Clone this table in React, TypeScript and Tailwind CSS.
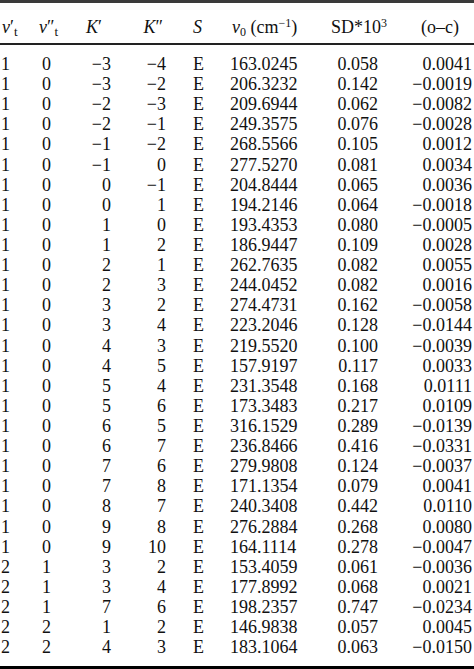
const cols = "grid grid-cols-[42px_28px_41px_55px_64px_70px_78px_1fr]";

const rows: string[][] = [
  ["1", "0", "−3", "−4", "E", "163.0245", "0.058", "0.0041"],
  ["1", "0", "−3", "−2", "E", "206.3232", "0.142", "−0.0019"],
  ["1", "0", "−2", "−3", "E", "209.6944", "0.062", "−0.0082"],
  ["1", "0", "−2", "−1", "E", "249.3575", "0.076", "−0.0028"],
  ["1", "0", "−1", "−2", "E", "268.5566", "0.105", "0.0012"],
  ["1", "0", "−1", "0", "E", "277.5270", "0.081", "0.0034"],
  ["1", "0", "0", "−1", "E", "204.8444", "0.065", "0.0036"],
  ["1", "0", "0", "1", "E", "194.2146", "0.064", "−0.0018"],
  ["1", "0", "1", "0", "E", "193.4353", "0.080", "−0.0005"],
  ["1", "0", "1", "2", "E", "186.9447", "0.109", "0.0028"],
  ["1", "0", "2", "1", "E", "262.7635", "0.082", "0.0055"],
  ["1", "0", "2", "3", "E", "244.0452", "0.082", "0.0016"],
  ["1", "0", "3", "2", "E", "274.4731", "0.162", "−0.0058"],
  ["1", "0", "3", "4", "E", "223.2046", "0.128", "−0.0144"],
  ["1", "0", "4", "3", "E", "219.5520", "0.100", "−0.0039"],
  ["1", "0", "4", "5", "E", "157.9197", "0.117", "0.0033"],
  ["1", "0", "5", "4", "E", "231.3548", "0.168", "0.0111"],
  ["1", "0", "5", "6", "E", "173.3483", "0.217", "0.0109"],
  ["1", "0", "6", "5", "E", "316.1529", "0.289", "−0.0139"],
  ["1", "0", "6", "7", "E", "236.8466", "0.416", "−0.0331"],
  ["1", "0", "7", "6", "E", "279.9808", "0.124", "−0.0037"],
  ["1", "0", "7", "8", "E", "171.1354", "0.079", "0.0041"],
  ["1", "0", "8", "7", "E", "240.3408", "0.442", "0.0110"],
  ["1", "0", "9", "8", "E", "276.2884", "0.268", "0.0080"],
  ["1", "0", "9", "10", "E", "164.1114", "0.278", "−0.0047"],
  ["2", "1", "3", "2", "E", "153.4059", "0.061", "−0.0036"],
  ["2", "1", "3", "4", "E", "177.8992", "0.068", "0.0021"],
  ["2", "1", "7", "6", "E", "198.2357", "0.747", "−0.0234"],
  ["2", "2", "1", "2", "E", "146.9838", "0.057", "0.0045"],
  ["2", "2", "4", "3", "E", "183.1064", "0.063", "−0.0150"],
];

// italic v, prime, roman subscript t
function VLabel({ prime }: { prime: string }) {
  return (
    <span className="whitespace-nowrap">
      <i>v</i>
      {prime}
      <sub className="text-[13px]">t</sub>
    </span>
  );
}

export default function App() {
  return (
    <div className="w-[474px] h-[669px] bg-white text-[18px] text-[#111] font-['Liberation_Serif',serif] flex flex-col">
      <div className="h-[3px] bg-[#3a3a3a]" />
      <div className={`${cols} h-[40px] pt-[7px] items-center leading-none`}>
        <div className="pl-[2px]">
          <VLabel prime="′" />
        </div>
        <div className="-ml-[3px]">
          <VLabel prime="″" />
        </div>
        <div className="text-right pr-[9px]">
          <i>K</i>′
        </div>
        <div className="text-right pr-[3px]">
          <i>K</i>″
        </div>
        <div className="pl-[27px]">
          <i>S</i>
        </div>
        <div className="pl-[2px] whitespace-nowrap">
          <i>ν</i>
          <sub className="text-[12px]">0</sub> (cm
          <sup className="text-[12px]">−1</sup>)
        </div>
        <div className="-mr-[9px] text-right whitespace-nowrap">
          SD*10<sup className="text-[12px]">3</sup>
        </div>
        <div className="text-right pr-[15px]">(o–c)</div>
      </div>
      <div className="h-[1.5px] bg-[#222]" />
      <div className="flex flex-col pt-[9.5px]">
        {rows.map((r, i) => (
          <div key={i} className={`${cols} h-[20.12px] leading-[20.12px]`}>
            <div className="pl-[1px]">{r[0]}</div>
            <div>{r[1]}</div>
            <div className="text-right">{r[2]}</div>
            <div className="text-right">{r[3]}</div>
            <div className="pl-[27px]">{r[4]}</div>
            <div>{r[5]}</div>
            <div className="text-right">{r[6]}</div>
            <div className="text-right pr-[2px]">{r[7]}</div>
          </div>
        ))}
      </div>
      <div className="flex-1" />
      <div className="h-[3px] bg-black" />
    </div>
  );
}
